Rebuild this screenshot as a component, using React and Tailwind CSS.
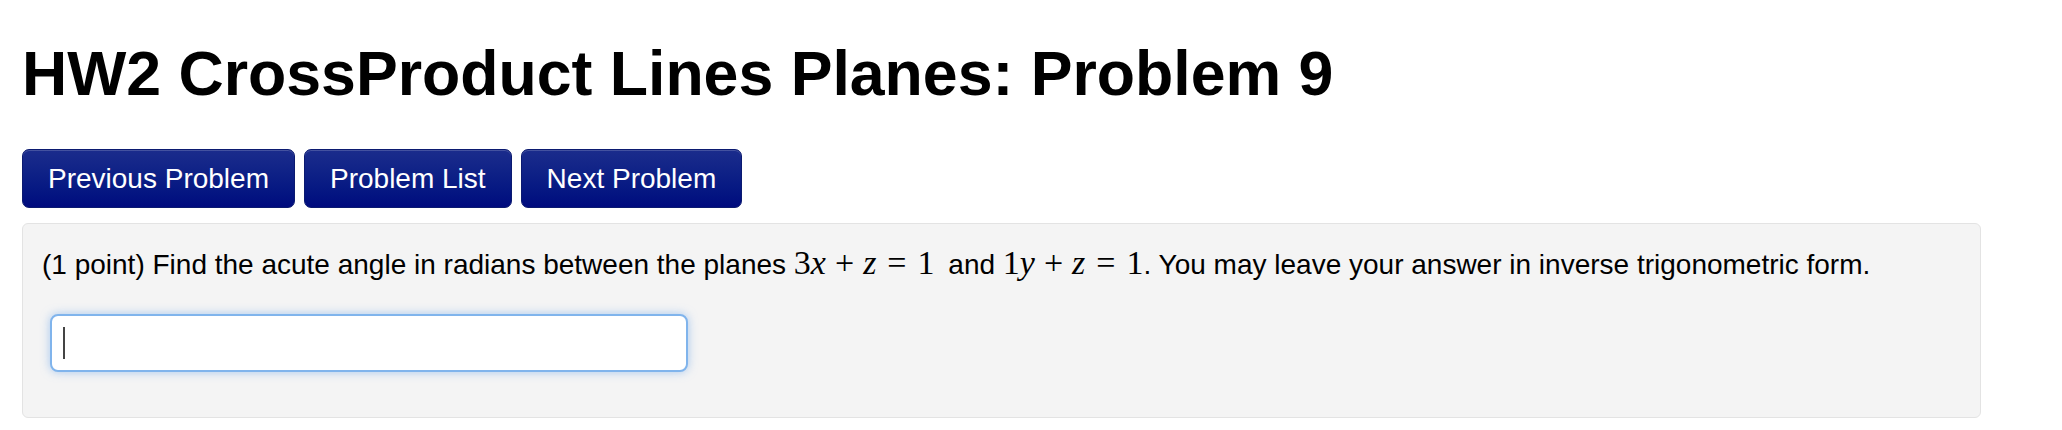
import React from 'react';

const navButtons = ['Previous Problem', 'Problem List', 'Next Problem'];

const MathVar = ({ children }) => (
  <span className="italic">{children}</span>
);

const Op = ({ children, wide }) => (
  <span className={wide ? 'mx-[11px]' : 'mx-[9px]'}>{children}</span>
);

const Equation = ({ coef, v, className = '' }) => (
  <span className={`font-['Liberation_Serif','Times_New_Roman',serif] text-[34px] ${className}`}>
    {coef}
    <MathVar>{v}</MathVar>
    <Op>+</Op>
    <MathVar>z</MathVar>
    <Op wide>=</Op>1
  </span>
);

const App = () => {
  return (
    <div className="min-h-[430px] bg-white pl-[22px] pr-[81px] pt-[38px] font-['Liberation_Sans',Arial,sans-serif] text-black">
      <h1 className="text-[62.6px] font-bold leading-[70px]">
        HW2 CrossProduct Lines Planes: Problem 9
      </h1>

      <div className="mt-[41px] flex gap-[9px]">
        {navButtons.map((label) => (
          <button
            key={label}
            className="flex h-[59px] items-center rounded-[7px] border border-[#0b1a70] bg-gradient-to-b from-[#1b2c8c] to-[#000a7e] px-[25px] text-[28px] text-white shadow-[inset_0_1px_0_rgba(255,255,255,0.18)]"
          >
            {label}
          </button>
        ))}
      </div>

      <div className="mt-[15px] h-[195px] rounded-[6px] border border-[#e3e3e3] bg-[#f4f4f4] pl-[19px] pt-[19px]">
        <p className="text-[28px] leading-[40px]">
          (1 point) Find the acute angle in radians between the planes{' '}
          <Equation coef="3" v="x" className="mr-[6px]" /> and{' '}
          <Equation coef="1" v="y" />. You may leave your answer in inverse trigonometric form.
        </p>

        <div className="ml-[8px] mt-[29px] flex h-[58px] w-[638px] items-center rounded-[8px] border-2 border-[#80b4ec] bg-white pl-[11px] shadow-[0_0_10px_rgba(102,163,233,0.55)]">
          <span className="h-[32px] w-[2px] bg-[#444]" />
        </div>
      </div>
    </div>
  );
};

export default App;
